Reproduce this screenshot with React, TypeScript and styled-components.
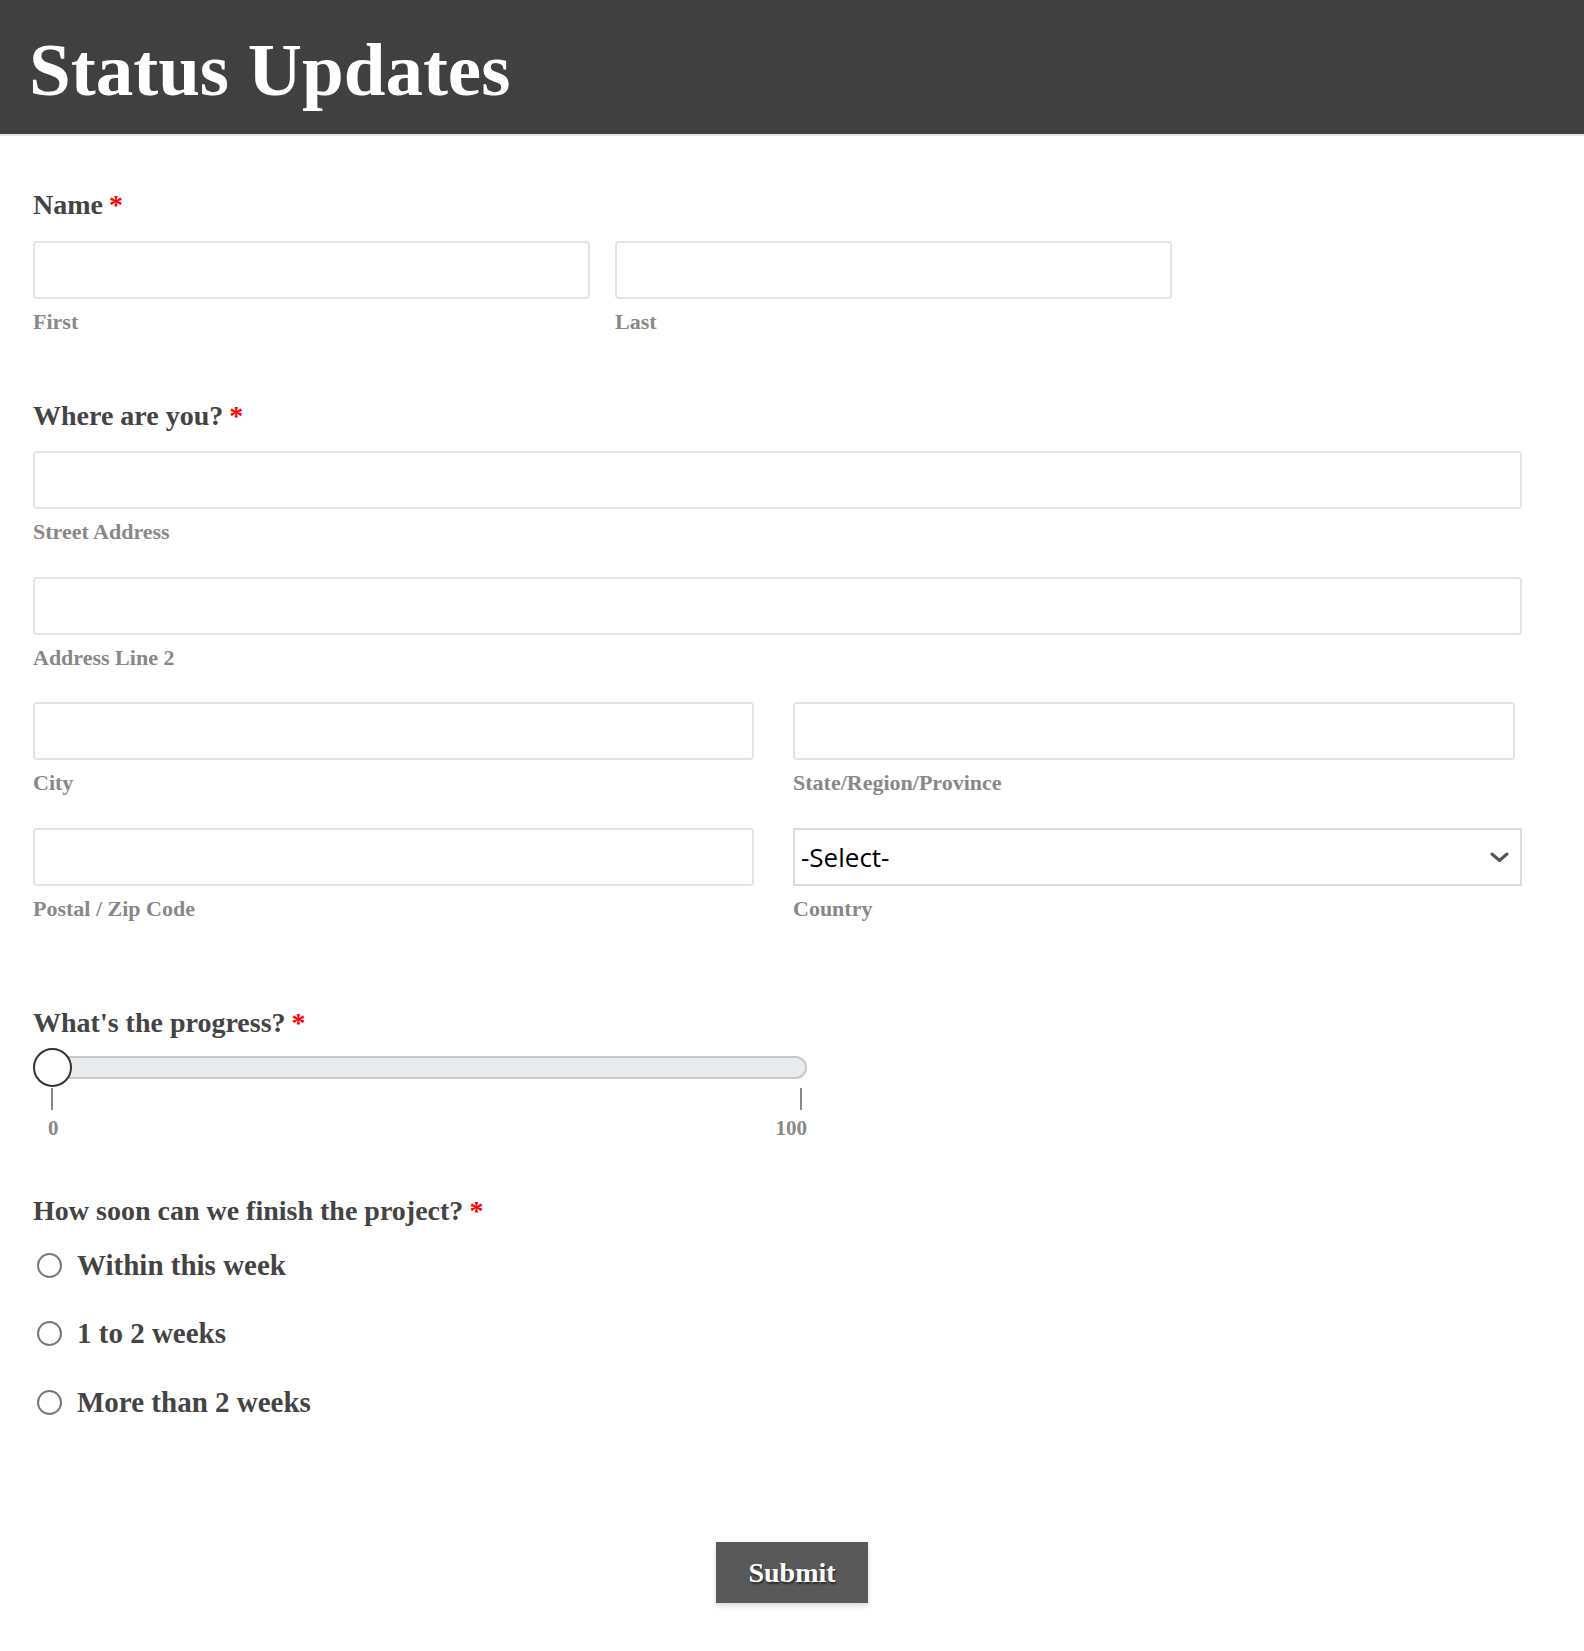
import React from "react";
import styled, { createGlobalStyle } from "styled-components";

const GlobalStyle = createGlobalStyle`
  html, body { margin: 0; padding: 0; background: #ffffff; }
  body { font-family: "Liberation Serif", "Times New Roman", serif; }
  * { box-sizing: border-box; }
`;

const SERIF = `"Liberation Serif", "Times New Roman", serif`;

const Header = styled.header`
  height: 136px;
  background: #404040;
  border-bottom: 2px solid #e6e6e6;
  display: flex;
  align-items: center;
  padding-left: 29px;
`;

const Title = styled.h1`
  margin: 0;
  color: #ffffff;
  font-family: ${SERIF};
  font-weight: 700;
  font-size: 75px;
  line-height: 1;
  padding-top: 4px;
`;

const Form = styled.form`
  padding: 53px 62px 47px 33px;
  display: flex;
  flex-direction: column;
`;

const Section = styled.section<{ $gap: number }>`
  margin-top: ${(p) => p.$gap}px;
  display: flex;
  flex-direction: column;
`;

const Question = styled.div`
  font-family: ${SERIF};
  font-weight: 700;
  font-size: 28px;
  line-height: 32px;
  color: #444444;
`;

const Req = styled.span`
  color: #ff0000;
  margin-left: 6px;
`;

const Row = styled.div<{ $cols: string; $gap: number; $top: number }>`
  display: grid;
  grid-template-columns: ${(p) => p.$cols};
  column-gap: ${(p) => p.$gap}px;
  margin-top: ${(p) => p.$top}px;
`;

const Field = styled.div<{ $trim?: number }>`
  display: flex;
  flex-direction: column;
  margin-right: ${(p) => p.$trim || 0}px;
`;

const TextInput = styled.input`
  height: 58px;
  width: 100%;
  border: 2px solid #e4e4e4;
  border-radius: 4px;
  background: #ffffff;
  outline: none;
  font-size: 20px;
  padding: 0 10px;
`;

const SelectBox = styled.div`
  height: 58px;
  width: 100%;
  border: 2px solid #dcdcdc;
  background: #ffffff;
  display: flex;
  align-items: center;
  justify-content: space-between;
  padding: 0 11px 0 6px;
  font-family: "Open Sans", "Noto Sans", sans-serif;
  font-size: 26px;
  color: #000000;
`;

const SubLabel = styled.div`
  margin-top: 11px;
  font-family: ${SERIF};
  font-weight: 700;
  font-size: 22px;
  line-height: 24px;
  color: #888888;
`;

const SliderWrap = styled.div`
  margin-top: 9px;
  width: 774px;
  display: flex;
  flex-direction: column;
`;

const Track = styled.div`
  position: relative;
  margin-left: 14px;
  height: 39px;
  display: flex;
  align-items: center;
`;

const Rail = styled.div`
  width: 100%;
  height: 23px;
  border: 2px solid #c8c8c8;
  border-radius: 12px;
  background: #e9ecee;
`;

const Thumb = styled.div`
  position: absolute;
  left: -14px;
  top: 0;
  width: 39px;
  height: 39px;
  border-radius: 50%;
  background: #ffffff;
  border: 2px solid #333333;
`;

const Ticks = styled.div`
  display: flex;
  justify-content: space-between;
  padding: 0 5px 0 18px;
  margin-top: 1px;
`;

const Tick = styled.div`
  width: 2px;
  height: 22px;
  background: #888888;
`;

const Scale = styled.div`
  display: flex;
  justify-content: space-between;
  padding: 0 0 0 15px;
  margin-top: 6px;
  font-family: ${SERIF};
  font-weight: 700;
  font-size: 21px;
  line-height: 24px;
  color: #888888;
`;

const Options = styled.div`
  margin-top: 22px;
  display: flex;
  flex-direction: column;
  gap: 36.5px;
`;

const Option = styled.label`
  display: flex;
  align-items: center;
  gap: 15px;
  padding-left: 4px;
  height: 32px;
  font-family: ${SERIF};
  font-weight: 700;
  font-size: 29px;
  color: #444444;
`;

const Radio = styled.span`
  width: 25px;
  height: 25px;
  border-radius: 50%;
  border: 2px solid #777777;
  background: #ffffff;
  flex: none;
`;

const Actions = styled.div`
  display: flex;
  justify-content: center;
  margin-top: 124px;
  margin-right: -29px;
`;

const SubmitButton = styled.button`
  width: 152px;
  height: 61px;
  border: none;
  background: #595959;
  color: #ffffff;
  font-family: ${SERIF};
  font-weight: 700;
  font-size: 28px;
  text-shadow: 1px 2px 2px rgba(0, 0, 0, 0.55);
  box-shadow: 0 3px 5px rgba(0, 0, 0, 0.15);
  cursor: pointer;
`;

const Chevron = () => (
  <svg width="19" height="11" viewBox="0 0 19 11" fill="none">
    <path d="M2 2 L9.5 8.5 L17 2" stroke="#555" strokeWidth="3" strokeLinecap="round" strokeLinejoin="round" />
  </svg>
);

export default function App() {
  return (
    <>
      <GlobalStyle />
      <Header>
        <Title>Status Updates</Title>
      </Header>
      <Form onSubmit={(e) => e.preventDefault()}>
        <Section $gap={0}>
          <Question>
            Name<Req>*</Req>
          </Question>
          <Row $cols="557px 557px" $gap={25} $top={20}>
            <Field>
              <TextInput />
              <SubLabel>First</SubLabel>
            </Field>
            <Field>
              <TextInput />
              <SubLabel>Last</SubLabel>
            </Field>
          </Row>
        </Section>

        <Section $gap={66}>
          <Question>
            Where are you?<Req>*</Req>
          </Question>
          <Row $cols="1fr" $gap={0} $top={19}>
            <Field>
              <TextInput />
              <SubLabel>Street Address</SubLabel>
            </Field>
          </Row>
          <Row $cols="1fr" $gap={0} $top={33}>
            <Field>
              <TextInput />
              <SubLabel>Address Line 2</SubLabel>
            </Field>
          </Row>
          <Row $cols="721px 1fr" $gap={39} $top={32}>
            <Field>
              <TextInput />
              <SubLabel>City</SubLabel>
            </Field>
            <Field $trim={7}>
              <TextInput />
              <SubLabel>State/Region/Province</SubLabel>
            </Field>
          </Row>
          <Row $cols="721px 1fr" $gap={39} $top={33}>
            <Field>
              <TextInput />
              <SubLabel>Postal / Zip Code</SubLabel>
            </Field>
            <Field>
              <SelectBox>
                <span>-Select-</span>
                <Chevron />
              </SelectBox>
              <SubLabel>Country</SubLabel>
            </Field>
          </Row>
        </Section>

        <Section $gap={86}>
          <Question>
            What's the progress?<Req>*</Req>
          </Question>
          <SliderWrap>
            <Track>
              <Rail />
              <Thumb />
            </Track>
            <Ticks>
              <Tick />
              <Tick />
            </Ticks>
            <Scale>
              <span>0</span>
              <span>100</span>
            </Scale>
          </SliderWrap>
        </Section>

        <Section $gap={55}>
          <Question>
            How soon can we finish the project?<Req>*</Req>
          </Question>
          <Options>
            <Option>
              <Radio />
              Within this week
            </Option>
            <Option>
              <Radio />
              1 to 2 weeks
            </Option>
            <Option>
              <Radio />
              More than 2 weeks
            </Option>
          </Options>
        </Section>

        <Actions>
          <SubmitButton type="submit">Submit</SubmitButton>
        </Actions>
      </Form>
    </>
  );
}
